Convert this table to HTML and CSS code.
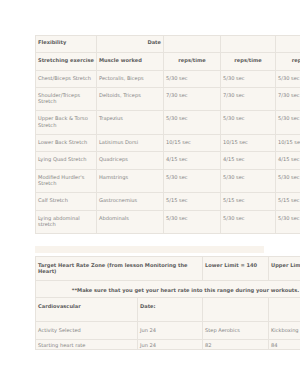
FILE: index.html
```html
<!DOCTYPE html>
<html lang="en">
<head>
  <meta charset="UTF-8">
  <meta name="viewport" content="width=device-width, initial-scale=1.0">
  <title>Fitness Log</title>
  <link rel="stylesheet" href="styles.css">
</head>
<body>

  <div class="page">

    <!-- Flexibility table -->
    <table class="log flex-table">
      <colgroup>
        <col class="c1"><col class="c2"><col class="c3"><col class="c4"><col class="c5">
      </colgroup>
      <tr class="top-row">
        <td class="head">Flexibility</td>
        <td class="head right">Date</td>
        <td></td>
        <td></td>
        <td></td>
      </tr>
      <tr>
        <td class="head nowrap">Stretching exercise</td>
        <td class="head">Muscle worked</td>
        <td class="head center">reps/time</td>
        <td class="head center">reps/time</td>
        <td class="head center">reps/time</td>
      </tr>
      <tr>
        <td>Chest/Biceps Stretch</td>
        <td>Pectoralis, Biceps</td>
        <td>5/30 sec</td>
        <td>5/30 sec</td>
        <td>5/30 sec</td>
      </tr>
      <tr>
        <td>Shoulder/Triceps Stretch</td>
        <td>Deltoids, Triceps</td>
        <td>7/30 sec</td>
        <td>7/30 sec</td>
        <td>7/30 sec</td>
      </tr>
      <tr>
        <td>Upper Back &amp; Torso Stretch</td>
        <td>Trapezius</td>
        <td>5/30 sec</td>
        <td>5/30 sec</td>
        <td>5/30 sec</td>
      </tr>
      <tr>
        <td>Lower Back Stretch</td>
        <td>Latisimus Dorsi</td>
        <td>10/15 sec</td>
        <td>10/15 sec</td>
        <td>10/15 sec</td>
      </tr>
      <tr>
        <td>Lying Quad Stretch</td>
        <td>Quadriceps</td>
        <td>4/15 sec</td>
        <td>4/15 sec</td>
        <td>4/15 sec</td>
      </tr>
      <tr>
        <td>Modified Hurdler's Stretch</td>
        <td>Hamstrings</td>
        <td>5/30 sec</td>
        <td>5/30 sec</td>
        <td>5/30 sec</td>
      </tr>
      <tr>
        <td>Calf Stretch</td>
        <td>Gastrocnemius</td>
        <td>5/15 sec</td>
        <td>5/15 sec</td>
        <td>5/15 sec</td>
      </tr>
      <tr>
        <td>Lying abdominal stretch</td>
        <td>Abdominals</td>
        <td>5/30 sec</td>
        <td>5/30 sec</td>
        <td>5/30 sec</td>
      </tr>
    </table>

    <div class="divider"></div>

    <!-- Heart rate table -->
    <table class="log heart-table">
      <colgroup>
        <col class="h1"><col class="h2"><col class="h3"><col class="h4">
      </colgroup>
      <tr>
        <td class="head" colspan="2">Target Heart Rate Zone (from lesson Monitoring the Heart)</td>
        <td class="head">Lower Limit = 140</td>
        <td class="head nowrap">Upper Limit = 170</td>
      </tr>
      <tr class="note-row">
        <td class="head center" colspan="4">**Make sure that you get your heart rate into this range during your workouts.</td>
      </tr>
      <tr class="tall-row">
        <td class="head">Cardiovascular</td>
        <td class="head">Date:</td>
        <td></td>
        <td></td>
      </tr>
      <tr>
        <td>Activity Selected</td>
        <td>Jun 24</td>
        <td>Step Aerobics</td>
        <td class="nowrap">Kickboxing</td>
      </tr>
      <tr class="short-row">
        <td>Starting heart rate</td>
        <td>Jun 24</td>
        <td>82</td>
        <td>84</td>
      </tr>
    </table>

  </div>

</body>
</html>
```

FILE: styles.css
```css
html, body {
  margin: 0;
  padding: 0;
  background: #fff;
  overflow: hidden;
}

.page {
  width: 300px;
  height: 388px;
  overflow: hidden;
  padding: 35px 0 0 35px;
  box-sizing: border-box;
  font-family: 'DejaVu Sans', sans-serif;
  font-size: 5.1px;
  line-height: 6.3px;
  color: #858585;
}

/* Shared table look */
.log {
  border-collapse: collapse;
  table-layout: fixed;
  background: #f9f6f1;
}

.log td {
  border: 1px solid #e7e3dd;
  padding: 4px 2px 6px 2px;
  vertical-align: top;
  overflow: hidden;
}

.log .head {
  font-weight: bold;
  color: #5c5c5c;
}

.top-row td {
  padding-top: 3px;
  padding-bottom: 7px;
}

.right {
  text-align: right;
}

.center {
  text-align: center;
}

.nowrap {
  white-space: nowrap;
}

/* Flexibility table */
.flex-table {
  width: 300px;
}

.c1 { width: 61px; }
.c2 { width: 67px; }
.c3 { width: 57px; }
.c4 { width: 55px; }
.c5 { width: 60px; }

/* Beige strip between tables */
.divider {
  width: 229px;
  height: 7px;
  margin: 12px 0 3px 0;
  background: #f8f3ec;
}

/* Heart rate table */
.heart-table {
  width: 300px;
}

.h1 { width: 102px; }
.h2 { width: 65px; }
.h3 { width: 66px; }
.h4 { width: 67px; }

.heart-table td {
  padding-top: 5px;
  padding-bottom: 5px;
}

.heart-table .note-row td {
  padding: 6px 2px 4px 2px;
  white-space: nowrap;
}

.heart-table .tall-row td {
  padding-bottom: 12px;
}

.heart-table .short-row td {
  padding: 2px 2px 1px 2px;
}
```
